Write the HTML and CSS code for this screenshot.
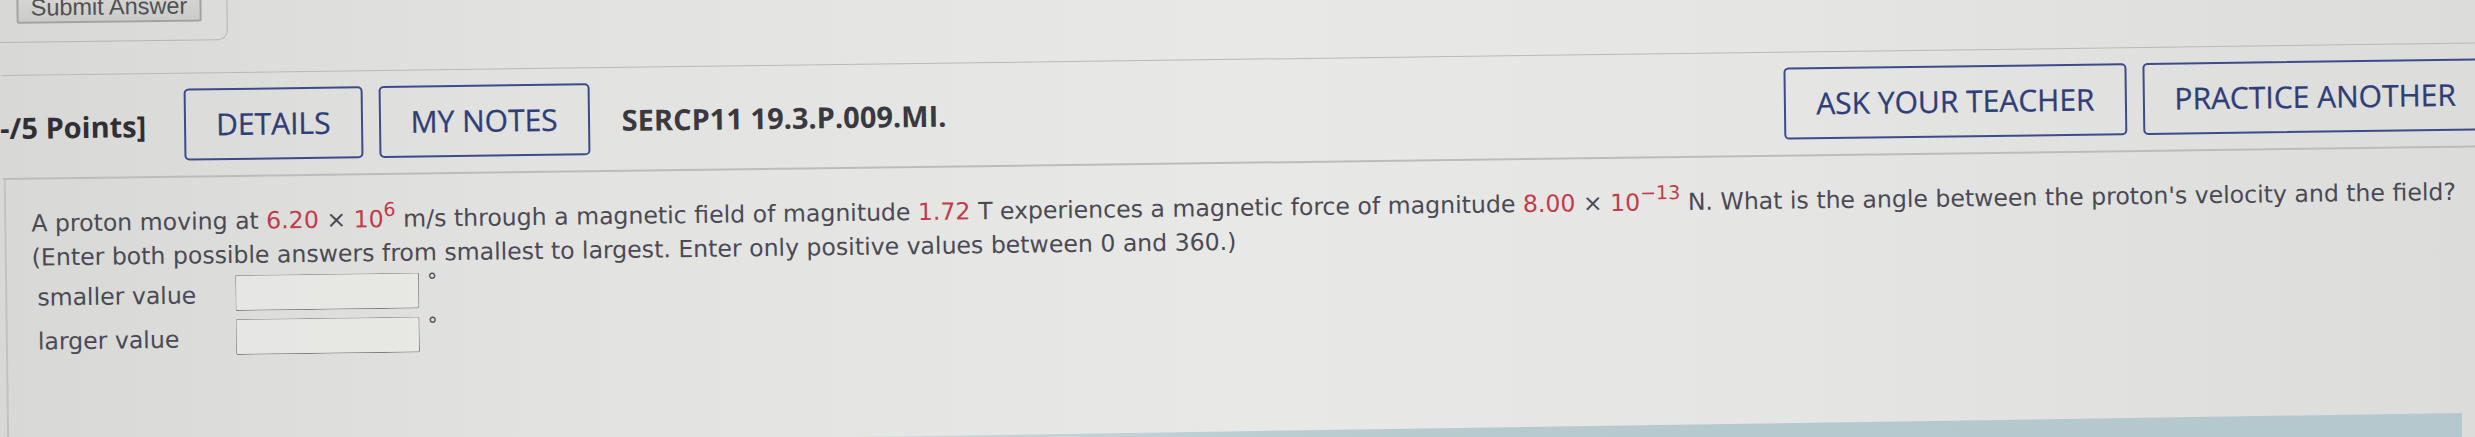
FILE: index.html
```html
<!DOCTYPE html>
<html lang="en">
<head>
<meta charset="utf-8">
<title>Question</title>
<link rel="stylesheet" href="styles.css">
</head>
<body>
<div class="page">
  <div class="top-panel">
    <button class="submit" type="button">Submit Answer</button>
  </div>

  <div class="q-header">
    <span class="points">-/5 Points]</span>
    <button class="btn" type="button">DETAILS</button>
    <button class="btn" type="button">MY NOTES</button>
    <span class="qid">SERCP11 19.3.P.009.MI.</span>
    <div class="right-tools">
      <button class="btn" type="button">ASK YOUR TEACHER</button>
      <button class="btn" type="button">PRACTICE ANOTHER</button>
    </div>
  </div>

  <div class="q-body">
    <p class="q-text">
      <span class="line">A proton moving at <span class="num">6.20</span> × <span class="num">10<sup>6</sup></span> m/s through a magnetic field of magnitude <span class="num">1.72</span> T experiences a magnetic force of magnitude <span class="num">8.00</span> × <span class="num">10<sup>−13</sup></span> N. What is the angle between the proton's velocity and the field?</span>
      <span class="line">(Enter both possible answers from smallest to largest. Enter only positive values between 0 and 360.)</span>
    </p>
    <div class="answers">
      <div class="answer-row">
        <span class="ans-label">smaller value</span>
        <input class="ans-input" type="text" aria-label="smaller value">
        <span class="deg">°</span>
      </div>
      <div class="answer-row">
        <span class="ans-label">larger value</span>
        <input class="ans-input" type="text" aria-label="larger value">
        <span class="deg">°</span>
      </div>
    </div>
  </div>
</div>

<svg class="desk-edge" width="2475" height="437" viewBox="0 0 2475 437" aria-hidden="true">
  <defs>
    <linearGradient id="edge" x1="0" y1="0" x2="1" y2="0">
      <stop offset="0" stop-color="#c9d6d9"/>
      <stop offset="0.35" stop-color="#b7cace"/>
      <stop offset="1" stop-color="#b4c8cd"/>
    </linearGradient>
  </defs>
  <polygon points="860,437 2462,413 2462,437" fill="url(#edge)"/>
</svg>
</body>
</html>
```

FILE: styles.css
```css
html {
  background: linear-gradient(90deg, #d8d8d6 0%, #e2e2e0 22%, #e8e8e6 50%, #e5e5e3 72%, #dcdcda 100%);
}

body {
  margin: 0;
  height: 437px;
  overflow: hidden;
  position: relative;
  font-family: "DejaVu Sans", Verdana, sans-serif;
}

.page {
  width: 2486px;
  transform: rotate(-0.75deg);
  transform-origin: 0 0;
}

/* previous question panel, scrolled mostly out of view */
.top-panel {
  box-sizing: border-box;
  width: 237px;
  height: 73px;
  margin: -30px 0 0 -10px;
  padding: 17px 0 0 25px;
  border: 1px solid #b6b6b4;
  border-radius: 0 0 10px 0;
}

.submit {
  box-sizing: border-box;
  width: 185px;
  height: 36px;
  padding: 3px 0 0;
  border: 2px solid #a2a2a0;
  border-radius: 2px;
  background: linear-gradient(#d9d9d7, #cbcbc9);
  color: #505052;
  font-family: "Liberation Sans", Arial, sans-serif;
  font-size: 23.5px;
  line-height: 28px;
}

/* question header */
.q-header {
  display: flex;
  align-items: center;
  gap: 16px;
  margin-top: 32px;
  padding: 15px 0;
  border-top: 1px solid #b9b9b7;
  border-bottom: 2px solid #bcbcba;
}

.points {
  margin-left: -2px;
  margin-right: 22px;
  font-family: "Open Sans", "Noto Sans", sans-serif;
  font-weight: 700;
  font-size: 29px;
  color: #2f2f35;
}

.qid {
  margin-left: 16px;
  font-family: "Open Sans", "Noto Sans", sans-serif;
  font-weight: 700;
  font-size: 29px;
  color: #3a3840;
}

.btn {
  box-sizing: border-box;
  height: 72px;
  padding: 0 30px;
  border: 2px solid #3d4c88;
  border-radius: 5px;
  background: transparent;
  color: #2f3e77;
  font-family: "Open Sans", "Noto Sans", sans-serif;
  font-size: 30px;
  line-height: 1;
  -webkit-text-stroke: 0.3px #2f3e77;
}

.right-tools {
  display: flex;
  gap: 16px;
  margin-left: auto;
}

/* question body */
.q-body {
  margin-left: 1px;
  padding: 27px 0 0 25px;
  height: 300px;
  border-left: 2px solid #c2c2c0;
}

.q-text {
  margin: 0;
  font-size: 23.6px;
  line-height: 34px;
  color: #4b4a54;
}

.line {
  display: block;
  white-space: nowrap;
}

.num {
  color: #c13b49;
}

sup {
  font-size: 19px;
  line-height: 0;
  vertical-align: 11px;
}

.answers {
  display: flex;
  flex-direction: column;
  gap: 6px;
  margin-top: 3px;
}

.answer-row {
  display: flex;
  align-items: flex-start;
}

.ans-label {
  width: 198px;
  padding: 2px 0 0 5px;
  font-size: 23.6px;
  line-height: 36px;
  color: #4b4a54;
}

.ans-input {
  box-sizing: border-box;
  width: 184px;
  height: 36px;
  margin: 0;
  border: 1px solid #9c9c9c;
  border-bottom-color: #7d7d80;
  border-right-color: #8a8a8c;
  border-radius: 2px;
  background: rgba(236, 236, 234, 0.6);
}

.deg {
  margin-left: 8px;
  margin-top: -2px;
  font-size: 20px;
  line-height: 20px;
  color: #4b4a54;
}

.desk-edge {
  position: absolute;
  left: 0;
  top: 0;
  pointer-events: none;
}
```
